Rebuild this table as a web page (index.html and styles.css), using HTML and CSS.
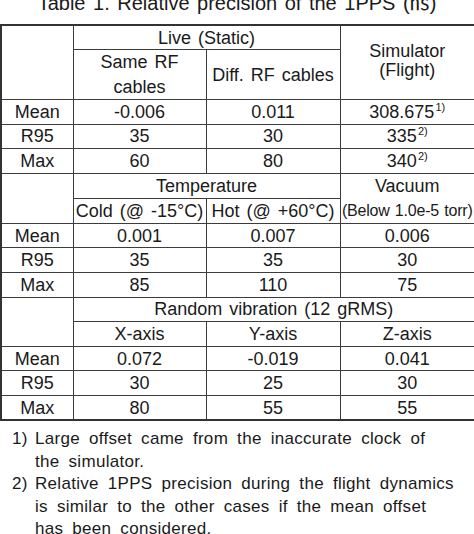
FILE: index.html
```html
<!DOCTYPE html>
<html>
<head>
<meta charset="utf-8">
<link rel="stylesheet" href="styles.css">
</head>
<body>
<div class="title">Table 1. Relative precision of the 1PPS (㎱)</div>
<table class="prec">
  <colgroup>
    <col class="c1"><col class="c2"><col class="c3"><col class="c4">
  </colgroup>
  <tr class="u1">
    <td rowspan="2"></td>
    <td colspan="2">Live (Static)</td>
    <td rowspan="2" class="sim">Simulator<br>(Flight)</td>
  </tr>
  <tr class="u2">
    <td class="two">Same RF<br>cables</td>
    <td>Diff. RF cables</td>
  </tr>
  <tr class="u1"><td>Mean</td><td>-0.006</td><td>0.011</td><td>308.675<sup>1)</sup></td></tr>
  <tr class="u1"><td>R95</td><td>35</td><td>30</td><td>335<sup>2)</sup></td></tr>
  <tr class="u1"><td>Max</td><td>60</td><td>80</td><td>340<sup>2)</sup></td></tr>
  <tr class="u1">
    <td rowspan="2"></td>
    <td colspan="2">Temperature</td>
    <td rowspan="2" class="vac">Vacuum<br><span class="small">(Below 1.0e-5 torr)</span></td>
  </tr>
  <tr class="u1"><td>Cold (@ -15°C)</td><td>Hot (@ +60°C)</td></tr>
  <tr class="u1"><td>Mean</td><td>0.001</td><td>0.007</td><td>0.006</td></tr>
  <tr class="u1"><td>R95</td><td>35</td><td>35</td><td>30</td></tr>
  <tr class="u1"><td>Max</td><td>85</td><td>110</td><td>75</td></tr>
  <tr class="u1">
    <td rowspan="2"></td>
    <td colspan="3">Random vibration (12 gRMS)</td>
  </tr>
  <tr class="u1"><td>X-axis</td><td>Y-axis</td><td>Z-axis</td></tr>
  <tr class="u1"><td>Mean</td><td>0.072</td><td>-0.019</td><td>0.041</td></tr>
  <tr class="u1"><td>R95</td><td>30</td><td>25</td><td>30</td></tr>
  <tr class="u1"><td>Max</td><td>80</td><td>55</td><td>55</td></tr>
</table>
<div class="notes">
  <div class="note"><span class="num">1)</span><span class="txt">Large offset came from the inaccurate clock of<br>the simulator.</span></div>
  <div class="note"><span class="num">2)</span><span class="txt">Relative 1PPS precision during the flight dynamics<br>is similar to the other cases if the mean offset<br>has been considered.</span></div>
</div>
</body>
</html>
```
FILE: styles.css
```css
html, body {
  margin: 0;
  padding: 0;
  background: #fff;
}
body {
  width: 474px;
  height: 534px;
  overflow: hidden;
  font-family: "Liberation Sans", Arial, "Noto Sans CJK KR", sans-serif;
  color: #1a1a1a;
}
.title {
  height: 31px;
  margin-top: -7px;
  font-size: 20px;
  line-height: 20px;
  text-align: center;
  word-spacing: 2px;
  white-space: nowrap;
}
.prec {
  width: 474px;
  border-collapse: collapse;
  table-layout: fixed;
  border: 2px solid #333;
  font-size: 18px;
  word-spacing: 2px;
}
.c1 { width: 72px; }
.c2 { width: 133px; }
.c3 { width: 134px; }
.c4 { width: 135px; }
.prec td {
  border: 1px solid #3c3c3c;
  padding: 0;
  text-align: center;
  vertical-align: middle;
  line-height: 20px;
  white-space: nowrap;
}
.u1 { height: 24.6px; }
.u2 { height: 49.2px; }
.prec td.two { line-height: 24.5px; }
.prec td.sim { line-height: 18.5px; padding-bottom: 4px; }
.prec td.vac { line-height: 24px; }
.small {
  font-size: 16px;
  word-spacing: 1px;
  letter-spacing: -0.2px;
}
sup {
  font-size: 11px;
  vertical-align: 7px;
  line-height: 0;
  margin-left: 1px;
}
.notes {
  margin-top: 7px;
  padding-left: 12px;
  font-size: 17px;
  line-height: 22.5px;
  letter-spacing: 0.3px;
  word-spacing: 4px;
}
.note {
  display: flex;
  white-space: nowrap;
}
.num {
  width: 23px;
  flex: none;
  word-spacing: 0;
}
```
